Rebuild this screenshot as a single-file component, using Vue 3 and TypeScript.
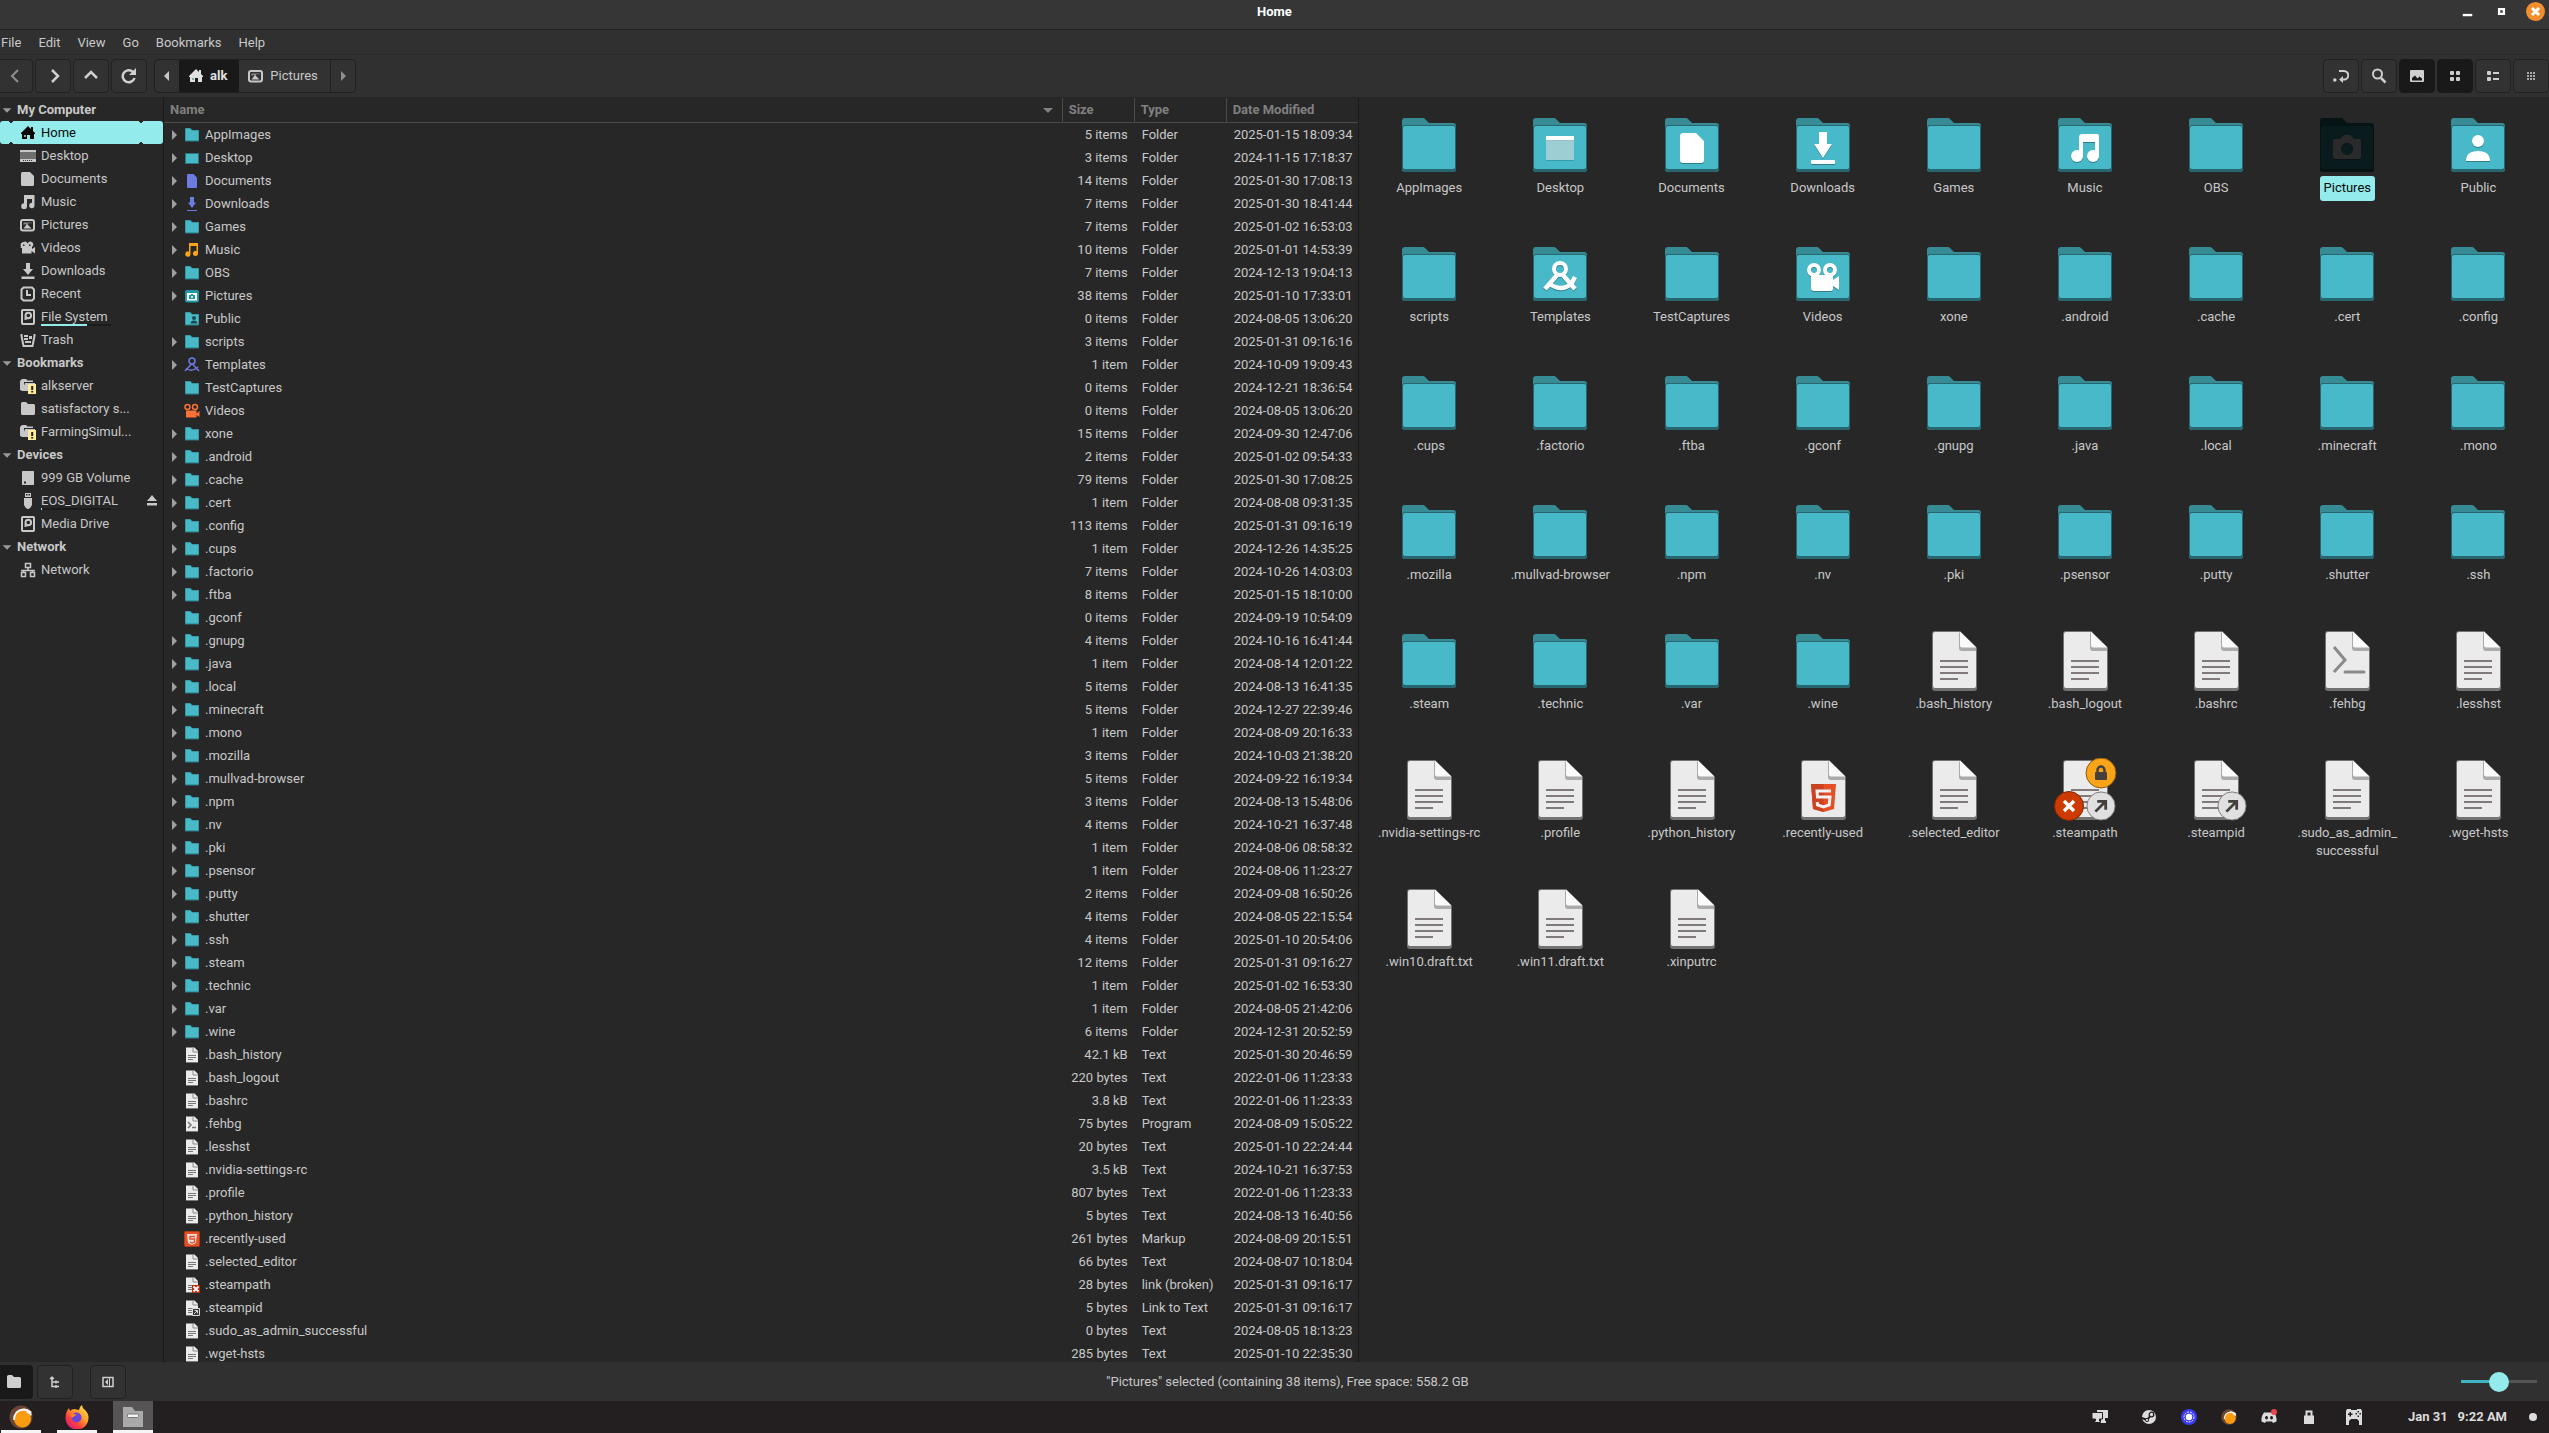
<script setup lang="ts">
import { ref } from 'vue'

interface Entry {
  name: string
  size: string
  kind: string
  date: string
  small: string
  large: string
  parts: string[]
  open: boolean
}

interface Place {
  label: string
  icon: string
  used?: number
  eject?: boolean
  active?: boolean
}

interface Section {
  title: string
  places: Place[]
}

const folderIcons: Record<string, string> = {
  Desktop: 'desktop',
  Documents: 'documents',
  Downloads: 'downloads',
  Music: 'music',
  Pictures: 'pictures',
  Public: 'public',
  Templates: 'templates',
  Videos: 'videos',
}

const fileIcons: Record<string, string> = {
  '.fehbg': 'script',
  '.recently-used': 'html',
  '.steampath': 'broken',
  '.steampid': 'link',
}

const folderRows = `AppImages|5|2025-01-15 18:09:34
Desktop|3|2024-11-15 17:18:37
Documents|14|2025-01-30 17:08:13
Downloads|7|2025-01-30 18:41:44
Games|7|2025-01-02 16:53:03
Music|10|2025-01-01 14:53:39
OBS|7|2024-12-13 19:04:13
Pictures|38|2025-01-10 17:33:01
Public|0|2024-08-05 13:06:20
scripts|3|2025-01-31 09:16:16
Templates|1|2024-10-09 19:09:43
TestCaptures|0|2024-12-21 18:36:54
Videos|0|2024-08-05 13:06:20
xone|15|2024-09-30 12:47:06
.android|2|2025-01-02 09:54:33
.cache|79|2025-01-30 17:08:25
.cert|1|2024-08-08 09:31:35
.config|113|2025-01-31 09:16:19
.cups|1|2024-12-26 14:35:25
.factorio|7|2024-10-26 14:03:03
.ftba|8|2025-01-15 18:10:00
.gconf|0|2024-09-19 10:54:09
.gnupg|4|2024-10-16 16:41:44
.java|1|2024-08-14 12:01:22
.local|5|2024-08-13 16:41:35
.minecraft|5|2024-12-27 22:39:46
.mono|1|2024-08-09 20:16:33
.mozilla|3|2024-10-03 21:38:20
.mullvad-browser|5|2024-09-22 16:19:34
.npm|3|2024-08-13 15:48:06
.nv|4|2024-10-21 16:37:48
.pki|1|2024-08-06 08:58:32
.psensor|1|2024-08-06 11:23:27
.putty|2|2024-09-08 16:50:26
.shutter|4|2024-08-05 22:15:54
.ssh|4|2025-01-10 20:54:06
.steam|12|2025-01-31 09:16:27
.technic|1|2025-01-02 16:53:30
.var|1|2024-08-05 21:42:06
.wine|6|2024-12-31 20:52:59`

const fileRows = `.bash_history|42.1 kB|Text|2025-01-30 20:46:59
.bash_logout|220 bytes|Text|2022-01-06 11:23:33
.bashrc|3.8 kB|Text|2022-01-06 11:23:33
.fehbg|75 bytes|Program|2024-08-09 15:05:22
.lesshst|20 bytes|Text|2025-01-10 22:24:44
.nvidia-settings-rc|3.5 kB|Text|2024-10-21 16:37:53
.profile|807 bytes|Text|2022-01-06 11:23:33
.python_history|5 bytes|Text|2024-08-13 16:40:56
.recently-used|261 bytes|Markup|2024-08-09 20:15:51
.selected_editor|66 bytes|Text|2024-08-07 10:18:04
.steampath|28 bytes|link (broken)|2025-01-31 09:16:17
.steampid|5 bytes|Link to Text|2025-01-31 09:16:17
.sudo_as_admin_successful|0 bytes|Text|2024-08-05 18:13:23
.wget-hsts|285 bytes|Text|2025-01-10 22:35:30`

const folders: Entry[] = folderRows.split('\n').map((row) => {
  const [name, count, date] = row.split('|')
  const icon = folderIcons[name] ?? 'folder'
  return {
    name,
    size: `${count} ${count === '1' ? 'item' : 'items'}`,
    kind: 'Folder',
    date,
    small: `s-${icon}`,
    large: icon,
    parts: [name],
    open: count !== '0',
  }
})

const files: Entry[] = fileRows.split('\n').map((row) => {
  const [name, size, kind, date] = row.split('|')
  const icon = fileIcons[name] ?? 'text'
  return {
    name,
    size,
    kind,
    date,
    small: `s-${icon}`,
    large: icon,
    parts: name.length > 20 ? name.split(/(?<=admin_)/) : [name],
    open: false,
  }
})

const rows: Entry[] = [...folders, ...files]
const drafts: Entry[] = ['.win10.draft.txt', '.win11.draft.txt', '.xinputrc'].map((name) => ({
  name, size: '', kind: 'Text', date: '', small: 's-text', large: 'text', parts: [name], open: false,
}))
const tiles: Entry[] = [...rows, ...drafts]

const isFolder = (e: Entry) => e.kind === 'Folder'
const selected = ref('Pictures')
const zoom = ref(50)

const menus = ['File', 'Edit', 'View', 'Go', 'Bookmarks', 'Help']

const sections: Section[] = [
  {
    title: 'My Computer',
    places: [
      { label: 'Home', icon: 'p-home', active: true },
      { label: 'Desktop', icon: 'p-desktop' },
      { label: 'Documents', icon: 'p-document' },
      { label: 'Music', icon: 'p-music' },
      { label: 'Pictures', icon: 'p-pictures' },
      { label: 'Videos', icon: 'p-videos' },
      { label: 'Downloads', icon: 'p-download' },
      { label: 'Recent', icon: 'p-recent' },
      { label: 'File System', icon: 'p-drive', used: 66 },
      { label: 'Trash', icon: 'p-trash' },
    ],
  },
  {
    title: 'Bookmarks',
    places: [
      { label: 'alkserver', icon: 'p-remote' },
      { label: 'satisfactory s...', icon: 'p-folder' },
      { label: 'FarmingSimul...', icon: 'p-remote' },
    ],
  },
  {
    title: 'Devices',
    places: [
      { label: '999 GB Volume', icon: 'p-volume' },
      { label: 'EOS_DIGITAL', icon: 'p-usb', used: 2, eject: true },
      { label: 'Media Drive', icon: 'p-drive' },
    ],
  },
  { title: 'Network', places: [{ label: 'Network', icon: 'p-network' }] },
]

const viewButtons = [
  { icon: 't-path', label: 'Toggle location entry', on: false },
  { icon: 't-search', label: 'Search', on: false },
  { icon: 't-image', label: 'Show thumbnails', on: true },
  { icon: 't-grid', label: 'Icon view', on: true },
  { icon: 't-list', label: 'List view', on: false },
  { icon: 't-compact', label: 'Compact view', on: false },
]
</script>

<template>
  <div class="desktop">
    <svg class="defs" aria-hidden="true">
      <defs>
        <!-- places, 16 x 16 -->
        <symbol id="p-home" viewBox="0 0 16 16"><path d="M8 1 1 8v1h1v5h5v-4h3v4h4V9h1V8l-2-2V2h-2v2z" /><path d="M4 10h2v2H4z" fill="#8aa" /></symbol>
        <symbol id="p-desktop" viewBox="0 0 16 16"><path d="M0 2h16v2H0z" /><path d="M0 4h16v8H0z" opacity=".45" /><path d="M0 11h16v3H0z" /><path d="M3 12.500h10" stroke="#333" stroke-dasharray="1 1" /></symbol>
        <symbol id="p-document" viewBox="0 0 16 16"><path d="M3 1h7l4 4v8.500q0 1.500-1.500 1.500h-10Q1 15 1 13.500v-11Q1 1 2.500 1z" /></symbol>
        <symbol id="p-music" viewBox="0 0 16 16"><path d="M4 1h10.500v10.500a2.700 2.700 0 1 1-2.500-2.700V5H7v7.200a2.900 2.900 0 1 1-3-2.900z" /></symbol>
        <symbol id="p-pictures" viewBox="0 0 16 16"><rect x="1" y="3" width="13" height="10.500" rx="2" fill="none" stroke="currentColor" stroke-width="2" /><path d="M3.500 5.500h8v1L9 6 7 8 5.500 7 3.500 8z" opacity=".6" /><path d="M3.500 11.500 7 7l4.500 4.500z" /></symbol>
        <symbol id="p-videos" viewBox="0 0 16 16"><path fill-rule="evenodd" d="M3.500 2A3 3 0 0 0 1 6.500L.5 8H2v5.500h9.500V11l3.500 2.500V7l-3 2V7a3 3 0 1 0-4.500-3.500A3 3 0 0 0 3.500 2zM3 4.500h1.500V6H3zm6 0h1.500V6H9z" /></symbol>
        <symbol id="p-download" viewBox="0 0 16 16"><path d="M6 0h4v6h3L8 12 3 6h3zM1.500 13.500h13V16h-13z" /></symbol>
        <symbol id="p-recent" viewBox="0 0 16 16"><path d="M3.500 1.500h8.500l2 2V12.500l-2 2H3.500l-2-2v-9z" fill="none" stroke="currentColor" stroke-width="2" /><path d="M7 4v5h4" fill="none" stroke="currentColor" stroke-width="2" /></symbol>
        <symbol id="p-drive" viewBox="0 0 16 16"><rect x="2" y="1" width="12" height="14" rx="1" fill="none" stroke="currentColor" stroke-width="2" /><circle cx="8.300" cy="6.500" r="2.800" fill="none" stroke="currentColor" stroke-width="2" /><path d="M4.500 11V8l3 2.500z" /></symbol>
        <symbol id="p-trash" viewBox="0 0 16 16"><path d="M1.500 2v2l2 10h9l2-10V2" fill="none" stroke="currentColor" stroke-width="2" /><path d="M4 3h4v2H4zm5 1h3v3H9zM4 6h4v2H4zm1 3h6v2H5z" /></symbol>
        <symbol id="p-folder" viewBox="0 0 16 16"><path d="M2.500 1H6l2 2h5.500Q15 3 15 4.500v8q0 1.500-1.500 1.500h-11Q1 14 1 12.500v-10Q1 1 2.500 1z" /></symbol>
        <symbol id="p-remote" viewBox="0 0 16 16"><path d="M2 1h4l1.500 1.500H13V4H4v9H2.500L0 12V3z" /><path d="M5 5h10v8H2z" /><path d="M8 6h8v10H8z" fill="#ffeb9b" /><path d="M11.200 8h2v4h-2zm0 5h2v1.500h-2z" fill="#222" /></symbol>
        <symbol id="p-volume" viewBox="0 0 16 16"><path fill-rule="evenodd" d="M2.500 1h11l.5.500v13l-.5.500h-11L2 14.500v-13zM4 11.500h2V13.500H4z" /></symbol>
        <symbol id="p-usb" viewBox="0 0 16 16"><path fill-rule="evenodd" d="M5 0h6v4H5zm1 1v1.500h1.500V1zm2.500 0v1.500H10V1z" /><path d="M4 5h8v7q-2 4-4 4t-4-4z" /></symbol>
        <symbol id="p-network" viewBox="0 0 16 16"><path d="M5.500 1.500h5v4h-5zM1.500 10.500h4v4h-4zM10.500 10.500h4v4h-4zM8 6v2.500M1 8.500h14M3.500 8.500v2M12.500 8.500v2" fill="none" stroke="currentColor" stroke-width="1.500" /></symbol>
        <symbol id="eject" viewBox="0 0 16 16"><path d="M8 2l5 6H3zM3 10h10v2.500H3z" /></symbol>

        <!-- list icons, 16 x 16 -->
        <symbol id="s-folder" viewBox="0 0 16 16"><path d="M1 1h5.500l2 2H15v11.500H1z" fill="#2a7883" /><path d="M1.500 1.500H6L8 3.500h6.500v10h-13z" fill="#48b9c7" /></symbol>
        <symbol id="s-desktop" viewBox="0 0 16 16"><path d="M1 3h14v11H1z" fill="#2a7883" /><path d="M2 4h12v9H2z" fill="#48b9c7" /></symbol>
        <symbol id="s-documents" viewBox="0 0 16 16"><path d="M4 1h5.500L13 4.500V14q0 1-1 1H4q-1 0-1-1V2q0-1 1-1z" fill="#6b7be0" /></symbol>
        <symbol id="s-downloads" viewBox="0 0 16 16"><path d="M6 1h4v5.500h2L8 12 4 6.500h2zM3 14h10v1H3z" fill="#6b7be0" /></symbol>
        <symbol id="s-music" viewBox="0 0 16 16"><path d="M5 1h9v10.500a2.500 2.500 0 1 1-1.500-2.300V4h-6v8a2.600 2.600 0 1 1-1.500-2.300z" fill="#faa41a" /></symbol>
        <symbol id="s-pictures" viewBox="0 0 16 16"><rect x="1" y="2" width="14" height="12.500" rx="2" fill="#2196a6" /><path d="M3 5h10v7.500H3z" fill="#fff" /><path d="M5 7h2V6h2v1h2v4H5z" fill="#2196a6" /><circle cx="8" cy="9" r="1" fill="#fff" /></symbol>
        <symbol id="s-public" viewBox="0 0 16 16"><use href="#s-folder" /><circle cx="10" cy="7" r="2" fill="#1d4a52" /><path d="M6.500 12.500Q7 9.500 10 9.500t3.500 3z" fill="#1d4a52" /></symbol>
        <symbol id="s-templates" viewBox="0 0 16 16"><path d="M8 6.500 1 14M8 6.500 15 14M2 11.500q6 4 12-1.500" fill="none" stroke="#6b7be0" stroke-width="1.500" /><circle cx="8" cy="4" r="3" fill="#282828" stroke="#6b7be0" stroke-width="1.500" /></symbol>
        <symbol id="s-videos" viewBox="0 0 16 16"><g fill="none" stroke="#fb7136" stroke-width="1.500"><circle cx="3.500" cy="4" r="2.500" /><circle cx="11" cy="4" r="2.500" /></g><path d="M2 7.500h10.500v3L15.500 8v6l-3-2v2.500H2z" fill="#fb7136" /></symbol>
        <symbol id="s-page" viewBox="0 0 16 16"><path d="M2 .5h8.500L14 4v11.500H2z" fill="#ebebeb" /><path d="M2 15h12v1H2z" fill="#777" /><path d="M9 1v4h5" fill="none" stroke="#888" /></symbol>
        <symbol id="s-text" viewBox="0 0 16 16"><use href="#s-page" /><path d="M4 8.500h8M4 10.500h8M4 12.500h5" stroke="#777" /></symbol>
        <symbol id="s-script" viewBox="0 0 16 16"><use href="#s-page" /><path d="M4 6l3 3-3 3M8 11.500h4" fill="none" stroke="#777" stroke-width="1.500" /></symbol>
        <symbol id="s-html" viewBox="0 0 16 16"><rect x="0" y="0" width="16" height="16" rx="2" fill="#b23a17" /><rect x="1" y="1" width="14" height="14" rx="1" fill="#e44f26" /><path d="M3 3h10l-1 9-4 2-4-2z" fill="#f1ded8" /><path d="M11 5.500H6v2.500h4.500v3L8 12l-2.200-1" fill="none" stroke="#e44f26" stroke-width="1.300" /></symbol>
        <symbol id="s-broken" viewBox="0 0 16 16"><use href="#s-text" /><path d="M8 8h8v8H8z" fill="#b8300a" /><path d="M9.500 9.500l5 5M14.500 9.500l-5 5" stroke="#fff" stroke-width="1.800" /></symbol>
        <symbol id="s-link" viewBox="0 0 16 16"><use href="#s-text" /><path d="M8.500 8.500h7v7h-7z" fill="#333" stroke="#ddd" /><path d="M10 14l3-3M10.500 10.500h3v3" fill="none" stroke="#ddd" /></symbol>

        <!-- folder glyphs, 64 x 64 -->
        <symbol id="folder" viewBox="0 0 64 64" />
        <symbol id="desktop" viewBox="0 0 64 64"><rect x="18" y="23" width="28" height="24" rx="1" opacity=".5" /><path d="M18 27v-3q0-1 1-1h26q1 0 1 1v3z" /></symbol>
        <symbol id="documents" viewBox="0 0 64 64"><path d="M23 20h13l8 8v19q0 3-3 3H23q-3 0-3-3V23q0-3 3-3z" /></symbol>
        <symbol id="downloads" viewBox="0 0 64 64"><path d="M28 19h8v12h5l-9 14-9-14h5z" /><rect x="20" y="47" width="24" height="4" rx="1" /></symbol>
        <symbol id="music" viewBox="0 0 64 64"><path d="M29 21h15q2 0 2 2v20h-4V29H30v14h-4V24q0-3 3-3z" /><circle cx="24" cy="43" r="6" /><circle cx="40" cy="43" r="6" /></symbol>
        <symbol id="pictures" viewBox="0 0 64 64"><path fill-rule="evenodd" d="M20 26h5l4-4h6l4 4h5q2 0 2 2v16q0 2-2 2H20q-2 0-2-2V28q0-2 2-2zm12 4a6 6 0 1 0 .1 0z" /></symbol>
        <symbol id="public" viewBox="0 0 64 64"><circle cx="32" cy="28" r="6" /><path d="M20 48q0-10 12-10t12 10z" /></symbol>
        <symbol id="templates" viewBox="0 0 64 64"><g fill="none" stroke="currentColor" stroke-width="4"><circle cx="32" cy="27" r="6" /><path d="M30 32 17 47M34 32l13 15M20 41q14 10 24 0l3-6" stroke-width="4.500" /></g></symbol>
        <symbol id="videos" viewBox="0 0 64 64"><g fill="none" stroke="currentColor" stroke-width="4"><circle cx="23" cy="28" r="5" /><circle cx="39" cy="28" r="5" /></g><path d="M20 33h22v5l6-4v14l-6-4v3q0 2-2 2H23q-3 0-3-3z" /></symbol>

        <!-- file glyphs, 64 x 64 -->
        <symbol id="text" viewBox="0 0 64 64"><path d="M18 32h28M18 38h28M18 44h28M18 50h18" stroke="#807a7b" stroke-width="2" /></symbol>
        <symbol id="script" viewBox="0 0 64 64"><path d="M19 18l11 13-11 12" fill="none" stroke="#8a8a8a" stroke-width="3" /><path d="M30 43h19" stroke="#8a8a8a" stroke-width="3" stroke-linecap="round" /></symbol>
        <symbol id="html" viewBox="0 0 64 64"><path d="M20 26h25l-2 25-10.500 3L22 51z" fill="#e44f26" /><path d="M20 26h12.500v28L22 51z" fill="#c9431f" /><path d="M40 33H26l.5 6H39l-.8 8-5.700 2-6-2-.3-3" fill="none" stroke="#f2f2f2" stroke-width="3" /></symbol>
        <symbol id="badge-link" viewBox="0 0 32 32"><circle cx="16" cy="16" r="15" fill="#e0e0e0" stroke="#777" /><path d="M10 22l10-10M12 11h9v9" fill="none" stroke="#45403c" stroke-width="3" /></symbol>
        <symbol id="broken" viewBox="0 0 64 64"><use href="#text" /></symbol>
        <symbol id="link" viewBox="0 0 64 64"><use href="#text" /></symbol>

        <!-- toolbar, 16 x 16 -->
        <symbol id="t-back" viewBox="0 0 16 16"><path d="M12 2 6 8l6 6" fill="none" stroke="currentColor" stroke-width="2" /></symbol>
        <symbol id="t-forward" viewBox="0 0 16 16"><path d="M7 2l6 6-6 6" fill="none" stroke="currentColor" stroke-width="2.500" /></symbol>
        <symbol id="t-up" viewBox="0 0 16 16"><path d="M2 10l6-6 6 6" fill="none" stroke="currentColor" stroke-width="2.500" /></symbol>
        <symbol id="t-reload" viewBox="0 0 16 16"><path d="M13.500 10A6 6 0 1 1 12 4" fill="none" stroke="currentColor" stroke-width="2.500" /><path d="M15 0v7H8z" /></symbol>
        <symbol id="t-path" viewBox="0 0 16 16"><path d="M6 3h5a4 4 0 0 1 0 8.500H9" fill="none" stroke="currentColor" stroke-width="2" /><path d="M10 8v7l-4-3.500z" /><circle cx="1.800" cy="12" r="1.800" /></symbol>
        <symbol id="t-search" viewBox="0 0 16 16"><circle cx="6.500" cy="6" r="4.500" fill="none" stroke="currentColor" stroke-width="2" /><path d="M10 10l4.500 4.500" stroke="currentColor" stroke-width="2.500" /></symbol>
        <symbol id="t-image" viewBox="0 0 16 16"><path fill-rule="evenodd" d="M2 2h12q1 0 1 1v10q0 1-1 1H2q-1 0-1-1V3q0-1 1-1zM3 12.500h10V10.500L10.500 8.500 8.500 10.500 6 7.500 3 10z" /></symbol>
        <symbol id="t-grid" viewBox="0 0 16 16"><g><rect x="3" y="3" width="4" height="4" rx="1" /><rect x="9" y="3" width="4" height="4" rx="1" /><rect x="3" y="9" width="4" height="4" rx="1" /><rect x="9" y="9" width="4" height="4" rx="1" /></g></symbol>
        <symbol id="t-list" viewBox="0 0 16 16"><rect x="2" y="3" width="4" height="4" rx="1" /><rect x="2" y="9" width="4" height="4" rx="1" /><path d="M8 4h6v2H8zM8 10h6v2H8z" /></symbol>
        <symbol id="t-compact" viewBox="0 0 16 16"><path d="M4 5h8M4 8h8M4 11h8" stroke="#a8a8a8" stroke-width="2" stroke-dasharray="2 1" /></symbol>
        <symbol id="t-tree" viewBox="0 0 16 16"><path d="M5 4v8.500h7M5 8h7M3 4.500h4M9 6.500v3M9 11v3" fill="none" stroke="currentColor" stroke-width="1.500" /><path d="M5 2l2.500 3h-5z" /></symbol>
        <symbol id="t-panel" viewBox="0 0 16 16"><rect x="3" y="3.500" width="10" height="9" fill="none" stroke="currentColor" stroke-width="1.500" /><path d="M8 5v6L5 8zM9 4h1v8H9z" /></symbol>
        <symbol id="tri-right" viewBox="0 0 16 16"><path d="M6 3l5 5-5 5z" /></symbol>
        <symbol id="tri-left" viewBox="0 0 16 16"><path d="M10 3 5 8l5 5z" /></symbol>
        <symbol id="tri-down" viewBox="0 0 16 16"><path d="M3 6h10l-5 5z" /></symbol>

        <!-- applications -->
        <symbol id="a-lutris" viewBox="0 0 24 24"><circle cx="12" cy="12" r="11.500" fill="#6b4637" /><path d="M7 7q8-6 15.500-.5L22 11l-3-2z" fill="#f4f1ee" /><circle cx="13.500" cy="14" r="8.500" fill="#fb9b10" /><path d="M5 15q0-9 9-10.500 5 0 7 4l-3-1.500" fill="none" stroke="#f4f1ee" stroke-width="1.800" /></symbol>
        <symbol id="a-firefox" viewBox="0 0 24 24"><defs><linearGradient id="ff" x1="1" y1="0" x2=".2" y2="1"><stop offset="0" stop-color="#fff44f" /><stop offset=".45" stop-color="#ff9a2b" /><stop offset=".75" stop-color="#fb3b3f" /><stop offset="1" stop-color="#d6188c" /></linearGradient></defs><path d="M14 5q0-3 3-5 0 3 3 5 3.500 3 3.500 8A11.500 11.500 0 0 1 .5 13Q.5 7 4 3l1 3q2-2 4-2z" fill="url(#ff)" /><circle cx="11.500" cy="12.500" r="5" fill="#6b45d8" /><path d="M5 10q4-2 7 0-3 0-4 2.500-2-.5-3-2.500z" fill="#ff8a1f" /></symbol>
        <symbol id="a-files" viewBox="0 0 24 24"><path d="M2 2h9l3 4h8v16H2z" fill="#a9a9a9" /><rect x="6.500" y="9" width="11" height="3.500" rx="1" fill="#f4f4f4" stroke="#777" /></symbol>
        <symbol id="n-displays" viewBox="0 0 16 16"><path d="M5 1h11v8h-3v3h1v2H8v-2h1V9H5z" /><path d="M0 3.500h10.500v6.500H7.500v2h1v1.500H2.500V12h1v-2H0z" stroke="#231f20" /></symbol>
        <symbol id="n-steam" viewBox="0 0 16 16"><circle cx="8" cy="8" r="7" /><path d="M1 9l5 2 4-5" fill="none" stroke="#231f20" stroke-width="2" /><circle cx="10.500" cy="5.500" r="2.300" fill="#ddd" stroke="#231f20" stroke-width="1.300" /><circle cx="6" cy="11" r="1.600" fill="#ddd" stroke="#231f20" /></symbol>
        <symbol id="n-signal" viewBox="0 0 16 16"><circle cx="8" cy="8" r="8" fill="#3a3af5" /><circle cx="8" cy="8" r="5" fill="none" stroke="#fff" stroke-dasharray="2 1" /><circle cx="8" cy="8" r="3.200" fill="#fff" /></symbol>
        <symbol id="n-discord" viewBox="0 0 16 16"><path fill-rule="evenodd" d="M3 3.500h10q3 4 2.500 9l-3.500 1.500-1-1.500H5L4 14 .5 12.500Q0 7.500 3 3.500zM5.500 7a1.500 1.700 0 1 0 .1 0zm5 0a1.500 1.700 0 1 0 .1 0z" /><circle cx="13" cy="3" r="3" fill="#e8484d" /></symbol>
        <symbol id="n-lock" viewBox="0 0 16 16"><path d="M5.500 7V2.500h5V7" fill="none" stroke="currentColor" stroke-width="2" /><path d="M3 6.500h10V15H3z" /></symbol>
        <symbol id="n-gamepad" viewBox="0 0 16 16"><path fill-rule="evenodd" d="M1 0h4v1h6V0h4l1 2v14h-3v-4l-2-2H5l-2 2v4H0V2zM3.500 3v1.500H2V6h1.500v1.500H5V6h1.500V4.500H5V3zM11.500 2v1.500H13V2zm0 4.500V8H13V6.500zM9.500 4v1.500H11V4zm4 0v1.500H15V4z" /></symbol>
      </defs>
    </svg>

    <header class="titlebar">
      <h1>Home</h1>
      <div class="window-controls">
        <button aria-label="Minimize"><svg viewBox="0 0 16 16"><path d="M4 10h8v2H4z" /></svg></button>
        <button aria-label="Maximize"><svg viewBox="0 0 16 16"><path d="M6 6h4v4H6z" fill="none" stroke="currentColor" stroke-width="2" /></svg></button>
        <button aria-label="Close" class="close"><svg viewBox="0 0 16 16"><path d="M5 5l6 6M11 5l-6 6" stroke="currentColor" stroke-width="2.500" /></svg></button>
      </div>
    </header>

    <nav class="menubar" aria-label="Menu">
      <button v-for="m in menus" :key="m">{{ m }}</button>
    </nav>

    <div class="toolbar">
      <div class="tools">
        <button class="tool edge dim" aria-label="Back"><svg><use href="#t-back" /></svg></button>
        <button class="tool" aria-label="Forward"><svg><use href="#t-forward" /></svg></button>
        <button class="tool" aria-label="Up"><svg><use href="#t-up" /></svg></button>
        <button class="tool" aria-label="Reload"><svg><use href="#t-reload" /></svg></button>
      </div>
      <nav class="path" aria-label="Location">
        <button aria-label="Scroll path left"><svg><use href="#tri-left" /></svg></button>
        <button class="current"><svg><use href="#p-home" /></svg>alk</button>
        <button class="crumb"><svg><use href="#p-pictures" /></svg>Pictures</button>
        <button class="dim" aria-label="Scroll path right"><svg><use href="#tri-right" /></svg></button>
      </nav>
      <div class="tools views">
        <button v-for="b in viewButtons" :key="b.icon" class="tool" :class="{ on: b.on }" :aria-label="b.label" :aria-pressed="b.on">
          <svg><use :href="'#' + b.icon" /></svg>
        </button>
      </div>
    </div>

    <main class="panes">
      <aside class="sidebar">
        <section v-for="s in sections" :key="s.title">
          <h2><svg><use href="#tri-down" /></svg>{{ s.title }}</h2>
          <a v-for="p in s.places" :key="p.label" href="#" class="place" :class="{ active: p.active }">
            <svg><use :href="'#' + p.icon" /></svg>
            <span>{{ p.label }}</span>
            <svg v-if="p.eject" class="eject"><use href="#eject" /></svg>
            <span v-if="p.used" class="usage"><i :style="{ width: p.used + '%' }"></i></span>
          </a>
        </section>
      </aside>

      <div class="list">
        <table>
          <colgroup><col /><col class="c-size" /><col class="c-type" /><col class="c-date" /></colgroup>
          <thead>
            <tr>
              <th scope="col"><div class="sorted">Name<svg><use href="#tri-down" /></svg></div></th>
              <th scope="col">Size</th>
              <th scope="col">Type</th>
              <th scope="col">Date Modified</th>
            </tr>
          </thead>
          <tbody>
            <tr v-for="e in rows" :key="e.name">
              <td>
                <div class="name">
                  <svg class="expander"><use v-if="e.open" href="#tri-right" /></svg>
                  <svg><use :href="'#' + e.small" /></svg>
                  <span>{{ e.name }}</span>
                </div>
              </td>
              <td class="size">{{ e.size }}</td>
              <td>{{ e.kind }}</td>
              <td>{{ e.date }}</td>
            </tr>
          </tbody>
        </table>
      </div>

      <div class="icons">
        <button v-for="e in tiles" :key="e.name" class="tile" :class="{ selected: selected === e.name }" @click="selected = e.name">
          <svg viewBox="0 0 64 64" class="art">
            <g v-if="isFolder(e)">
              <path class="back" d="M8 5h18q1 0 2 1l4 4h24q3 0 3 3v43q0 3-3 3H8q-3 0-3-3V8q0-3 3-3z" />
              <path class="base" d="M5 15q0-3 3-3h48q3 0 3 3v41q0 3-3 3H8q-3 0-3-3z" />
              <rect class="front" x="6" y="13" width="52" height="43" rx="2" />
              <use :href="'#' + e.large" y="1" class="shade" />
              <use :href="'#' + e.large" class="glyph" />
            </g>
            <g v-else>
              <path d="M13 2h25l17 17v40q0 3-3 3H13q-3 0-3-3V5q0-3 3-3z" fill="#737373" />
              <path d="M13 3h25l16 16v38q0 2-2 2H13q-2 0-2-2V5q0-2 2-2z" fill="#ebebeb" />
              <path d="M37 3v16q0 3 3 3h14v-3z" fill="#ababab" />
              <path d="M38 2.500v14q0 2 2 2h14.500z" fill="#fafafa" />
              <use :href="'#' + e.large" />
              <template v-if="e.large === 'broken'">
                <circle cx="48" cy="15" r="15" fill="#faa41a" stroke="#8a5a10" />
                <path d="M44.500 15v-3a3.500 3.500 0 0 1 7 0v3" fill="none" stroke="#45403c" stroke-width="2.500" />
                <rect x="42" y="14" width="12" height="8" rx="1" fill="#45403c" />
                <circle cx="16" cy="48" r="14.500" fill="#ce3b02" stroke="#7e2604" />
                <path d="M11 43l10 10M21 43 11 53" stroke="#fff" stroke-width="3.500" />
              </template>
              <use v-if="e.large === 'broken' || e.large === 'link'" href="#badge-link" x="33" y="32" width="30" height="32" />
            </g>
          </svg>
          <span class="label"><template v-for="(part, i) in e.parts" :key="i">{{ part }}<wbr /></template></span>
        </button>
      </div>
    </main>

    <footer class="statusbar">
      <button class="tool edge on" aria-label="Places"><svg><use href="#p-folder" /></svg></button>
      <button class="tool tree" aria-label="Tree view"><svg><use href="#t-tree" /></svg></button>
      <button class="tool" aria-label="Hide sidebar"><svg><use href="#t-panel" /></svg></button>
      <p>"{{ selected }}" selected (containing 38 items), Free space: 558.2 GB</p>
      <input v-model.number="zoom" type="range" min="0" max="100" aria-label="Icon size" />
    </footer>

    <nav class="taskbar" aria-label="Taskbar">
      <div class="apps">
        <button aria-label="Lutris"><svg><use href="#a-lutris" /></svg></button>
        <button aria-label="Firefox"><svg><use href="#a-firefox" /></svg></button>
        <button aria-label="Files" class="focused"><svg><use href="#a-files" /></svg></button>
      </div>
      <div class="tray">
        <svg class="displays"><use href="#n-displays" /></svg>
        <svg><use href="#n-steam" /></svg>
        <svg><use href="#n-signal" /></svg>
        <svg><use href="#a-lutris" /></svg>
        <svg><use href="#n-discord" /></svg>
        <svg><use href="#n-lock" /></svg>
        <svg class="gamepad"><use href="#n-gamepad" /></svg>
      </div>
      <div class="clock"><span>Jan 31</span><span>9:22 AM</span></div>
      <span class="dot"></span>
    </nav>
  </div>
</template>

<style>
body {
  background: #272727;
}
</style>

<style scoped>
.desktop {
  display: flex;
  flex-direction: column;
  height: 100vh;
  overflow: hidden;
  background: #272727;
  color: #c8c8c8;
  font: 13px/18px Roboto, "Noto Sans", sans-serif;
}
.desktop * {
  box-sizing: border-box;
}
.defs {
  position: absolute;
  width: 0;
  height: 0;
}
svg {
  display: block;
  flex: none;
  width: 16px;
  height: 16px;
  fill: currentColor;
}
button {
  margin: 0;
  padding: 0;
  border: 0;
  background: none;
  color: inherit;
  font: inherit;
}
a {
  color: inherit;
  text-decoration: none;
}

.titlebar {
  display: grid;
  grid-template-columns: 1fr auto 1fr;
  flex: none;
  align-items: center;
  height: 30px;
  padding-bottom: 6px;
  background: #363636;
  border-bottom: 1px solid #222;
}
.titlebar h1 {
  grid-column: 2;
  margin: 0;
  color: #fff;
  font-size: 13px;
  font-weight: 700;
}
.window-controls {
  display: flex;
  justify-content: flex-end;
  gap: 15px;
  padding-right: 4px;
  color: #fff;
}
.window-controls svg {
  width: 19px;
  height: 19px;
}
.close {
  border-radius: 50%;
  background: #f28e2b;
}

.menubar {
  display: flex;
  flex: none;
  gap: 17px;
  height: 25px;
  padding: 1px 0 0 1px;
  background: #303030;
  border-bottom: 1px solid #2a2a2a;
}

.toolbar {
  display: flex;
  flex: none;
  align-items: center;
  gap: 7px;
  height: 43px;
  background: #303030;
  border-bottom: 1px solid #252525;
}
.tools {
  display: flex;
  gap: 2px;
}
.views {
  margin-left: auto;
}
.tool {
  display: flex;
  align-items: center;
  justify-content: center;
  width: 36px;
  height: 34px;
  border: 1px solid #222;
  border-radius: 4px;
  background: #323232;
  color: #cfcfcf;
}
.tool.on {
  background: #191919;
  border-color: #191919;
}
.tool.edge {
  width: 33px;
  border-left: 0;
  border-radius: 0 4px 4px 0;
  padding-right: 4px;
}
.tool.dim,
.path .dim {
  color: #8f8f8f;
}
.path {
  display: flex;
  height: 34px;
  border: 1px solid #202020;
  border-radius: 4px;
  background: #323232;
}
.path button {
  display: flex;
  align-items: center;
  gap: 6px;
  padding: 0 4px;
}
.path .current {
  padding: 0 12px 0 9px;
  background: #191919;
  color: #e0e0e0;
  font-weight: 700;
}
.path .crumb {
  padding: 0 12px 0 9px;
  border-right: 1px solid #202020;
}

.panes {
  display: flex;
  flex: 1;
  min-height: 0;
}
.sidebar {
  flex: none;
  width: 164px;
  border-right: 1px solid #1a1a1a;
}
.sidebar h2 {
  display: flex;
  align-items: center;
  height: 23px;
  margin: 0;
  font-size: 13px;
  font-weight: 700;
}
.sidebar h2 svg {
  width: 14px;
  height: 14px;
  margin-right: 3px;
  color: #9a9a9a;
}
.place {
  position: relative;
  display: flex;
  align-items: center;
  gap: 5px;
  height: 23px;
  padding: 0 3px 0 20px;
}
.place.active {
  background: #93ebeb;
  border-radius: 3px;
  color: #0a0a0a;
}
.place.active::before {
  content: "";
  position: absolute;
  top: 0;
  bottom: 0;
  left: 9px;
  width: 134px;
  background:
    radial-gradient(circle at 2px 0, #272727 2px, transparent 2px),
    radial-gradient(circle at 132px 0, #272727 2px, transparent 2px),
    radial-gradient(circle at 2px 100%, #272727 2px, transparent 2px),
    radial-gradient(circle at 132px 100%, #272727 2px, transparent 2px);
}
.place .eject {
  margin-left: auto;
}
.usage {
  position: absolute;
  left: 41px;
  bottom: 2px;
  width: 70px;
  height: 2px;
  background: #1b1b1b;
}
.usage i {
  display: block;
  height: 100%;
  background: #93ebeb;
}

.list {
  flex: 1;
  min-width: 0;
  overflow: hidden;
  border-right: 1px solid #1a1a1a;
}
table {
  width: 100%;
  table-layout: fixed;
  border-collapse: separate;
  border-spacing: 0;
}
.c-size {
  width: 72px;
}
.c-type {
  width: 92px;
}
.c-date {
  width: 132px;
}
th {
  height: 25px;
  padding: 0 6px;
  border-bottom: 1px solid #4a4a4a;
  color: #808080;
  font-weight: 700;
  text-align: left;
}
th + th {
  border-left: 1px solid #4a4a4a;
}
.sorted {
  display: flex;
  align-items: center;
  justify-content: space-between;
}
td {
  height: 23px;
  padding: 0 0 0 8px;
  white-space: nowrap;
}
td:first-child {
  padding-left: 2px;
}
td.size {
  padding: 0 6px 0 0;
  text-align: right;
}
.name {
  display: flex;
  align-items: center;
  gap: 5px;
}
.name .expander {
  margin-right: -3px;
  color: #a0a0a0;
}

.icons {
  display: grid;
  flex: none;
  grid-template-columns: repeat(9, 1fr);
  grid-auto-rows: 129px;
  width: 46.7%;
  padding: 15px 5px 0;
}
.tile {
  display: flex;
  flex-direction: column;
  align-items: center;
}
.art {
  width: 64px;
  height: 63px;
}
.back {
  fill: #378b95;
}
.base {
  fill: #28666f;
}
.front {
  fill: #48b9c9;
}
.glyph {
  fill: #fff;
  color: #fff;
}
.shade {
  fill: #2e7f8a;
  color: #2e7f8a;
}
.art {
  height: 64px;
}
.label {
  max-width: 120px;
  margin-top: -1px;
  padding: 3px 4px 4px;
  border-radius: 3px;
}
.selected .back,
.selected .base {
  fill: #071416;
}
.selected .front {
  fill: #0a1b1e;
}
.selected .glyph {
  fill: #2a2a2a;
}
.selected .shade {
  fill: #071416;
}
.selected .label {
  background: #93ebeb;
  color: #0a0a0a;
}

.statusbar {
  display: flex;
  flex: none;
  align-items: center;
  height: 39px;
  background: #303030;
}
.statusbar .tree {
  margin: 0 17px 0 4px;
}
.statusbar p {
  flex: 1;
  margin: 0;
  text-align: center;
}
.statusbar input {
  width: 76px;
  height: 20px;
  margin: 0 12px;
  appearance: none;
  background: linear-gradient(90deg, #3fb3bf 50%, #555 50%) center / 100% 3px no-repeat;
}
.statusbar input::-webkit-slider-thumb {
  appearance: none;
  width: 20px;
  height: 20px;
  border-radius: 50%;
  background: #93ebeb;
}

.taskbar {
  display: flex;
  flex: none;
  align-items: center;
  height: 32px;
  padding: 0 12px 0 1px;
  background: #231f20;
  color: #dcdcdc;
}
.apps {
  display: flex;
  gap: 16px;
}
.apps button {
  display: flex;
  justify-content: center;
  width: 40px;
  height: 32px;
  padding-top: 4px;
  border-bottom: 3px solid #f5f5f5;
}
.apps svg {
  width: 24px;
  height: 24px;
}
.apps .focused {
  background: #565455;
}
.tray {
  display: flex;
  gap: 24px;
  margin-left: auto;
}
.tray .displays {
  margin-right: 9px;
}
.tray .gamepad {
  margin-left: 5px;
}
.clock {
  display: flex;
  gap: 10px;
  margin: 0 22px 0 46px;
  font-weight: 700;
}
.dot {
  width: 8px;
  height: 8px;
  border-radius: 50%;
  background: #dcdcdc;
}
</style>
